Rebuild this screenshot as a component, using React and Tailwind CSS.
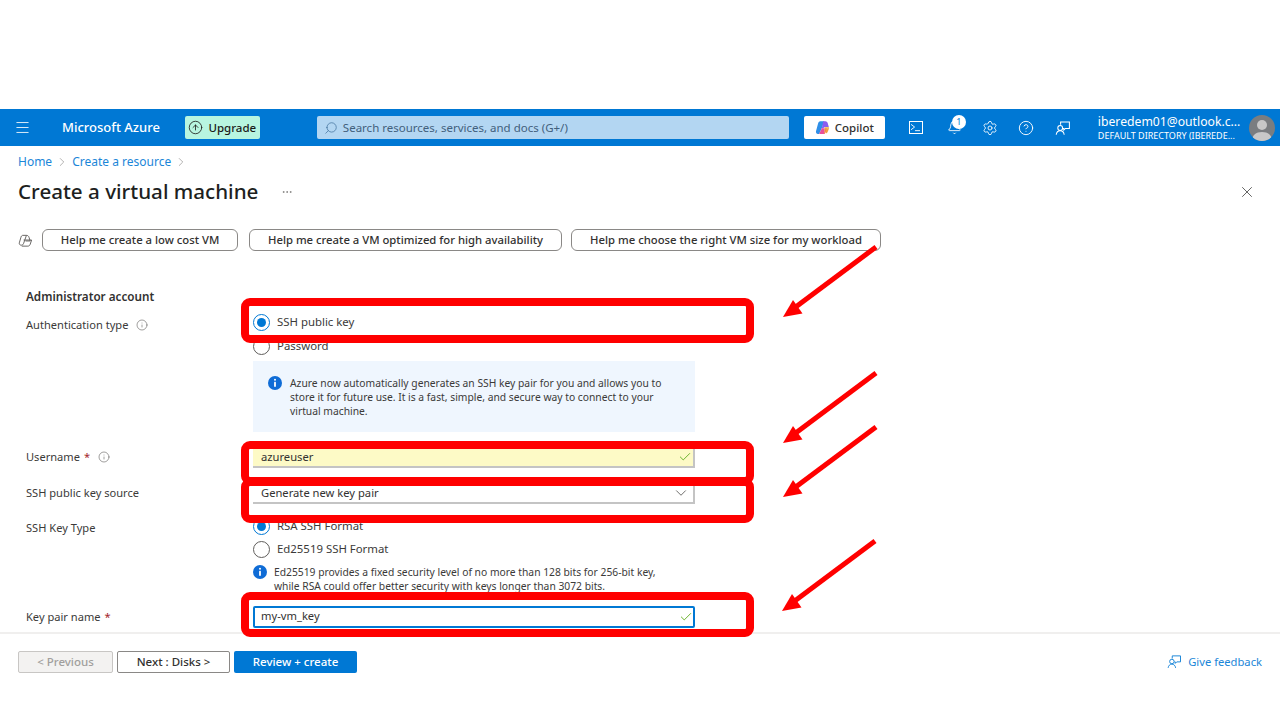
import React from 'react';
import { Menu, Search, Bell, Settings, CircleHelp, X, ChevronDown, Check, Info, CircleArrowUp, Ellipsis, ChevronRight } from 'lucide-react';

const font = { fontFamily: '"Noto Sans", "Open Sans", sans-serif' };

const FeedbackIcon = ({ className }) => (
    <svg viewBox="0 0 20 20" fill="none" stroke="currentColor" strokeWidth="1.300" className={className}>
        <path d="M7 6V2.500h11v8h-5l-2 2v-2h-1" />
        <circle cx="6.500" cy="10" r="3" />
        <path d="M1.500 18.500c.4-3 2.400-5 5-5s4.600 2 5 5" />
    </svg>
);

const CopilotLogo = () => (
    <svg viewBox="0 0 20 20" className="w-[15px] h-[15px]">
        <path d="M7 1.500h5.500L9 11l-3.500 7.500H4C1.800 18.500.8 16.500 1.400 14.500L4 5c.4-2 1.500-3.500 3-3.500z" fill="#2f8fe8" />
        <path d="M11 1.500h3c1.700 0 2.600 1.300 3 2.800L18.500 9.500H13l-4 2z" fill="#8a5cf0" />
        <path d="M5.500 18.500 9 11h4l-1 7.500z" fill="#e84f9b" />
        <path d="M12 18.500l1-7.500h3l-2 5.500c-.4 1.200-1 2-2 2z" fill="#f2703f" />
        <path d="M13 9.500h5.500l.3 1.500H13z" fill="#f5c23e" />
        <path d="M13.500 11h5.300L17 15.500c-.4 1.200-1.200 2-2.500 2.300z" fill="#f2a03f" />
    </svg>
);

const CopilotMono = () => (
    <svg viewBox="0 0 16 16" fill="none" stroke="#605e5c" strokeWidth="1" className="w-[15px] h-[15px]">
        <path d="M5 2.500h4L6 11c-.4 1.300-1.200 2-2.500 2S1 12 1.400 10.500L3 5c.4-1.500 1-2.500 2-2.500z" />
        <path d="M9 2.500c1.500 0 2.300.8 2.700 2L13 8.500H8" />
        <path d="M6 7.500h8.500L13 12c-.4 1.300-1.200 2-2.500 2H4" />
    </svg>
);

const Radio = ({ checked, label }) => (
    <div className="flex items-center h-5">
        <span className={`w-[17px] h-[17px] rounded-full border flex items-center justify-center shrink-0 ${checked ? 'border-[#0078d4]' : 'border-[#605e5c]'}`}>
            {checked && <span className="w-[9px] h-[9px] rounded-full bg-[#0078d4]" />}
        </span>
        <span className="ml-[7px] text-[11.400px] text-[#3b3a39]">{label}</span>
    </div>
);

const Label = ({ text, required, info, className }) => (
    <div className={`w-[227px] shrink-0 flex items-center text-[11.100px] text-[#3b3a39] ${className}`}>
        <span>{text}</span>
        {required && <span className="text-[#a4262c] ml-1">*</span>}
        {info && <Info size={12} strokeWidth={1.200} className="ml-2 text-[#605e5c]" />}
    </div>
);

const BlueInfo = ({ size }) => (
    <span className="rounded-full bg-[#0f6cd6] flex items-center justify-center shrink-0 text-white" style={{ width: size, height: size }}>
        <svg viewBox="0 0 14 14" className="w-full h-full" fill="currentColor">
            <circle cx="7" cy="3.800" r="1" />
            <rect x="6.100" y="5.800" width="1.800" height="5" rx=".4" />
        </svg>
    </span>
);

const Suggestion = ({ className, children }) => (
    <button className={`h-[22px] rounded-[6px] border border-[#8a8886] text-[11.300px] font-medium text-[#323130] whitespace-nowrap ${className}`}>
        {children}
    </button>
);

const Arrow = ({ x, y }) => (
    <g transform={`translate(${x} ${y})`}>
        <path d="M93 0 L10 62" stroke="#ff0000" strokeWidth="5" fill="none" />
        <path d="M0 70 L10 53 L19.500 66.500 Z" fill="#ff0000" />
    </g>
);

const App = () => {
    return (
        <div className="relative w-[1280px] h-[720px] bg-white overflow-hidden" style={font}>
            <div className="h-[109px]" />

            {/* Portal header */}
            <header className="h-[37px] bg-[#0078d4] flex items-center text-white">
                <Menu size={17} strokeWidth={1.200} className="ml-[14px]" />
                <span className="ml-[31px] text-[13px] font-medium">Microsoft Azure</span>
                <div className="ml-[25px] w-[75px] h-[23px] rounded-[2px] bg-[#b8f5e0] flex items-center justify-center text-[#1b1a19] text-[11.500px] font-medium">
                    <CircleArrowUp size={15} strokeWidth={1.300} className="mr-[5px]" />
                    Upgrade
                </div>
                <div className="ml-[57px] w-[472px] h-[23px] rounded-[2px] bg-[#b3d6f2] flex items-center text-[#42607c] text-[11.500px] pl-[7px]">
                    <Search size={14} strokeWidth={1.200} className="-scale-x-100 text-[#3c6d98]" />
                    <span className="ml-[5px]">Search resources, services, and docs (G+/)</span>
                </div>
                <div className="ml-[15px] w-[81px] h-[23px] rounded-[2px] bg-white flex items-center justify-center text-[#323130] text-[11.500px] font-medium">
                    <CopilotLogo />
                    <span className="ml-[5px]">Copilot</span>
                </div>
                <div className="ml-[24px] w-[14px] h-[13px] border border-white flex items-center justify-start text-[9px] leading-none">
                    <svg viewBox="0 0 12 10" fill="none" stroke="currentColor" strokeWidth="1" className="w-[11px] h-[9px]">
                        <path d="M1 1.500 5 4.500 1 7.500M5.500 8.500H11" />
                    </svg>
                </div>
                <div className="relative ml-[24px] w-[14px] h-[16px]">
                    <Bell size={15} strokeWidth={1.400} />
                    <span className="absolute -top-[5px] left-[5px] w-[14px] h-[14px] rounded-full bg-white text-[#0078d4] text-[9px] flex items-center justify-center">1</span>
                </div>
                <Settings size={16} strokeWidth={1.300} className="ml-[21px]" />
                <CircleHelp size={16} strokeWidth={1.400} className="ml-[20px]" />
                <FeedbackIcon className="ml-[21px] w-[16px] h-[16px]" />
                <div className="ml-[27px] w-[143px] leading-none">
                    <div className="text-[12.200px] leading-[15px] whitespace-nowrap">iberedem01@outlook.c...</div>
                    <div className="text-[9px] leading-[13px] whitespace-nowrap">DEFAULT DIRECTORY (IBEREDE...</div>
                </div>
                <div className="ml-[8px] w-[26px] h-[26px] rounded-full bg-[#7a7d80] overflow-hidden shrink-0">
                    <svg viewBox="0 0 26 26" className="w-full h-full" fill="#c8c8c8">
                        <circle cx="13" cy="10" r="5" />
                        <path d="M3 26c0-6 4-9 10-9s10 3 10 9z" />
                    </svg>
                </div>
            </header>

            {/* Breadcrumb and title */}
            <nav className="h-[31px] pl-[18px] flex items-center text-[12px] text-[#1b86d8]">
                <span>Home</span>
                <ChevronRight size={14} strokeWidth={1.100} className="mx-[3px] text-[#8a8886]" />
                <span>Create a resource</span>
                <ChevronRight size={14} strokeWidth={1.100} className="ml-[3px] text-[#8a8886]" />
            </nav>
            <div className="h-[29px] pl-[18px] pr-[24px] flex items-center">
                <h1 className="text-[20.600px] font-medium text-[#201f1e] w-[241px] whitespace-nowrap">Create a virtual machine</h1>
                <Ellipsis size={12} strokeWidth={1.200} className="ml-[22px] text-[#605e5c]" />
                <X size={18} strokeWidth={1} className="ml-auto text-[#323130]" />
            </div>

            {/* Copilot prompts */}
            <div className="mt-[23px] pl-[18px] flex items-center">
                <CopilotMono />
                <div className="ml-[9px] flex">
                    <Suggestion className="w-[196px]">Help me create a low cost VM</Suggestion>
                    <Suggestion className="ml-[11px] w-[313px]">Help me create a VM optimized for high availability</Suggestion>
                    <Suggestion className="ml-[9px] w-[310px]">Help me choose the right VM size for my workload</Suggestion>
                </div>
            </div>

            {/* Form */}
            <section className="pl-[26px] h-[381px] overflow-hidden">
                <h2 className="mt-[37px] h-[18px] flex items-center text-[11.700px] font-semibold text-[#323130]">Administrator account</h2>

                <div className="mt-[6px] flex">
                    <Label text="Authentication type" info className="h-5 mt-[3px]" />
                    <div className="w-[442px]">
                        <Radio checked label="SSH public key" />
                        <div className="mt-[4px]"><Radio label="Password" /></div>
                        <div className="mt-[5px] h-[71px] bg-[#eff6fe] pl-[15px] pr-[14px] pt-[15px] flex text-[10.300px] leading-[14px] text-[#3b3a39]">
                            <BlueInfo size={14} />
                            <p className="ml-[8px]">Azure now automatically generates an SSH key pair for you and allows you to store it for future use. It is a fast, simple, and secure way to connect to your virtual machine.</p>
                        </div>
                    </div>
                </div>

                <div className="mt-[14px] flex">
                    <Label text="Username" required info className="h-[22px]" />
                    <div className="w-[442px] h-[22px] bg-[#fdfac6] border-b-2 border-r-2 border-[#c4c4c4] pt-[2px] pl-[8px] pr-[1px] flex items-center justify-between text-[11.200px] text-[#323130]">
                        <span>azureuser</span>
                        <Check size={14} strokeWidth={1.700} className="text-[#6bb32e]" />
                    </div>
                </div>

                <div className="mt-[14px] flex">
                    <Label text="SSH public key source" className="h-[22px]" />
                    <div className="w-[442px] h-[22px] bg-white border-b-2 border-r-2 border-[#c4c4c4] pt-[2px] pl-[8px] pr-[3px] flex items-center justify-between text-[11.200px] text-[#323130]">
                        <span>Generate new key pair</span>
                        <ChevronDown size={18} strokeWidth={1.200} className="text-[#605e5c]" />
                    </div>
                </div>

                <div className="mt-[12px] flex">
                    <Label text="SSH Key Type" className="h-5 mt-[2px]" />
                    <div className="w-[442px]">
                        <Radio checked label="RSA SSH Format" />
                        <div className="mt-[3px]"><Radio label="Ed25519 SSH Format" /></div>
                        <div className="mt-[6px] flex text-[10.300px] leading-[14px] text-[#3b3a39]">
                            <BlueInfo size={14} />
                            <p className="ml-[7px] w-[395px]">Ed25519 provides a fixed security level of no more than 128 bits for 256-bit key, while RSA could offer better security with keys longer than 3072 bits.</p>
                        </div>
                    </div>
                </div>

                <div className="mt-[13px] flex">
                    <Label text="Key pair name" required className="h-[22px]" />
                    <div className="w-[442px] h-[22px] bg-white border-2 border-[#0078d4] rounded-[2px] pb-[1px] pl-[6px] pr-0 flex items-center justify-between text-[11.200px] text-[#323130]">
                        <span>my-vm_key</span>
                        <Check size={14} strokeWidth={1.700} className="text-[#6bb32e]" />
                    </div>
                </div>
            </section>

            {/* Footer actions */}
            <footer className="h-[88px] border-t-2 border-[#f0efee] pl-[18px] pr-[18px] pt-[17px] flex items-start text-[11.500px]">
                <button className="w-[95px] h-[22px] bg-[#f3f2f1] border border-[#c8c6c4] rounded-[2px] text-[#a19f9d] font-medium">&lt; Previous</button>
                <button className="ml-[4px] w-[113px] h-[22px] bg-white border border-[#8a8886] rounded-[2px] text-[#323130] font-medium">Next : Disks &gt;</button>
                <button className="ml-[4px] w-[123px] h-[22px] bg-[#0078d4] rounded-[2px] text-white font-medium">Review + create</button>
                <div className="ml-auto h-[22px] flex items-center text-[11.200px] text-[#1b86d8]">
                    <FeedbackIcon className="w-[15px] h-[15px] -translate-y-[1px]" />
                    <span className="ml-[6px]">Give feedback</span>
                </div>
            </footer>

            {/* Red annotations drawn on top of the screenshot */}
            <div className="absolute left-[241px] top-[298px] w-[513px] h-[45px] border-[8px] border-[#ff0000] rounded-[9px]" />
            <div className="absolute left-[241px] top-[441px] w-[513px] h-[44px] border-[8px] border-[#ff0000] rounded-[9px]" />
            <div className="absolute left-[241px] top-[478px] w-[513px] h-[45px] border-[8px] border-[#ff0000] rounded-[9px]" />
            <div className="absolute left-[241px] top-[592px] w-[513px] h-[45px] border-[8px] border-[#ff0000] rounded-[9px]" />
            <svg className="absolute inset-0 w-[1280px] h-[720px] pointer-events-none" viewBox="0 0 1280 720">
                <Arrow x={783} y={247} />
                <Arrow x={783} y={373} />
                <Arrow x={783} y={427} />
                <Arrow x={782} y={541} />
            </svg>
        </div>
    );
};

export default App;
